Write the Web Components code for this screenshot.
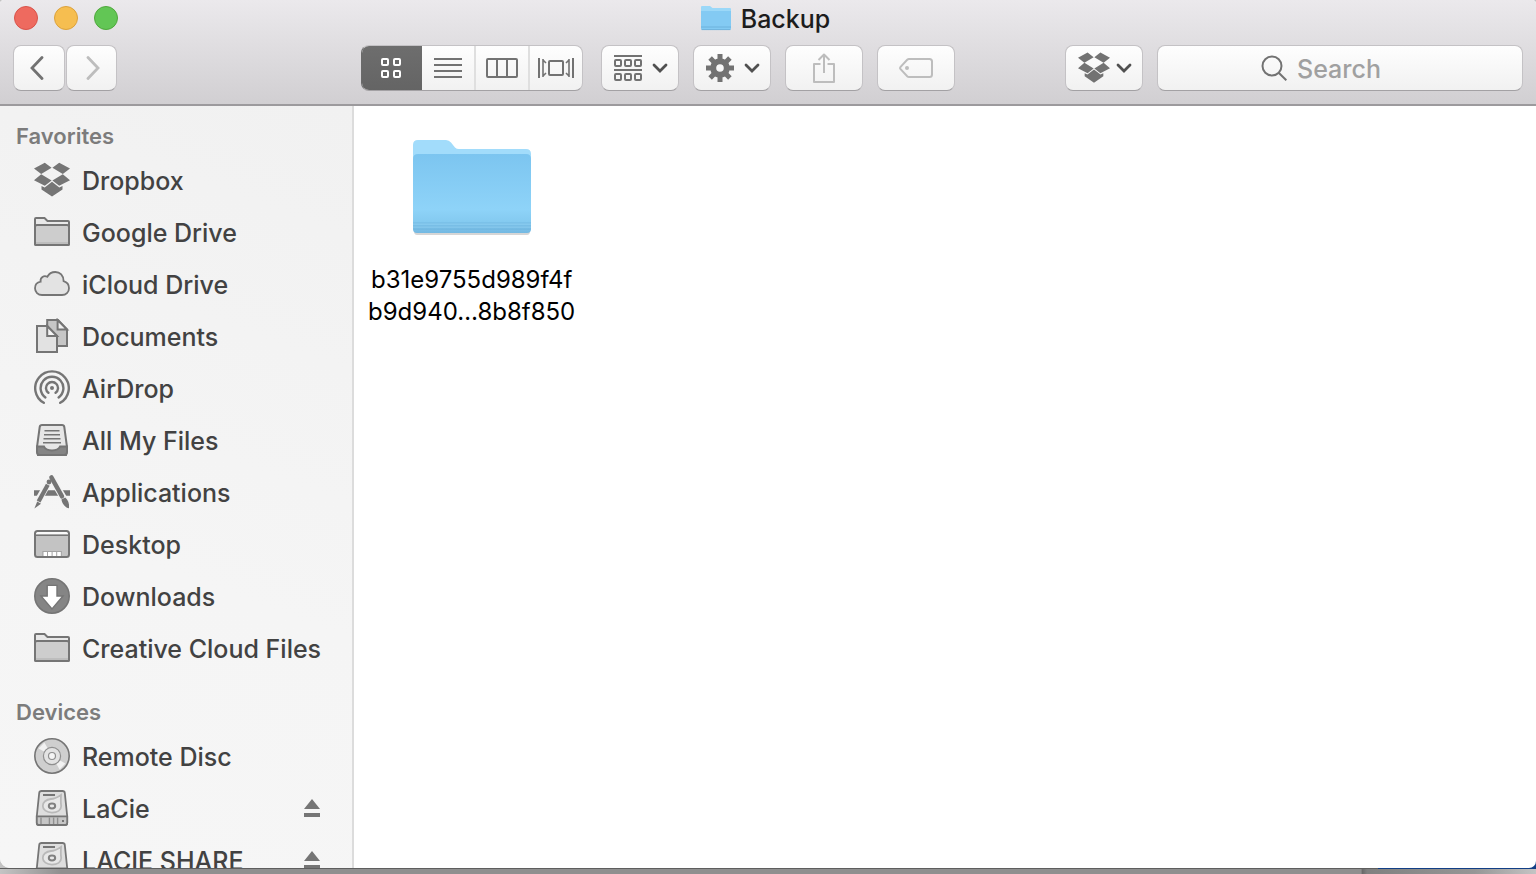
<!DOCTYPE html>
<html lang="en">
<head>
<meta charset="utf-8">
<title>Backup</title>
<style>
    body {
        margin: 0;
        height: 100vh;
        overflow: hidden;
        font-family: Inter, "Liberation Sans", sans-serif;
        font-size: 25px;
        font-weight: 450;
        /* the desktop that shows below the window */
        background:
            linear-gradient(#123f86, #123f86) right bottom 5px / 158px 12px no-repeat,
            linear-gradient(#5e5e5e, #5e5e5e) left bottom 5px / 100% 1px no-repeat,
            linear-gradient(90deg, #c4c4c4, #8f8f8f 4%, #8f8f8f 88.6%, #6a6a6a 88.7%, #808080 89%, #969696 96%, #c4c4c4);
    }
</style>
</head>
<body>
<finder-window>
    <finder-toolbar slot="toolbar" title-text="Backup"></finder-toolbar>
    <sidebar-section slot="sidebar" heading="Favorites">
        <sidebar-item icon="dropbox">Dropbox</sidebar-item>
        <sidebar-item icon="folder">Google Drive</sidebar-item>
        <sidebar-item icon="cloud">iCloud Drive</sidebar-item>
        <sidebar-item icon="documents">Documents</sidebar-item>
        <sidebar-item icon="airdrop">AirDrop</sidebar-item>
        <sidebar-item icon="allfiles">All My Files</sidebar-item>
        <sidebar-item icon="applications">Applications</sidebar-item>
        <sidebar-item icon="desktop">Desktop</sidebar-item>
        <sidebar-item icon="downloads">Downloads</sidebar-item>
        <sidebar-item icon="folder">Creative Cloud Files</sidebar-item>
    </sidebar-section>
    <sidebar-section slot="sidebar" heading="Devices">
        <sidebar-item icon="disc">Remote Disc</sidebar-item>
        <sidebar-item icon="drive" eject>LaCie</sidebar-item>
        <sidebar-item icon="drive" eject>LACIE SHARE</sidebar-item>
    </sidebar-section>
    <folder-tile>b31e9755d989f4f<br>b9d940…8b8f850</folder-tile>
</finder-window>

<script>
// sidebar and toolbar icons, all drawn with currentColor
const icons = {
    dropbox: `<svg width="36" height="36" viewBox="0 0 36 36" fill="currentColor">
        <path d="M10.8.7 17.6 5.8 7.2 12 0 6.4zM25.2.7 18.4 5.8 28.8 12 36 6.4zM7.2 12.2 17.6 18.6 10.8 23.8 0 18.2zM28.8 12.2 18.4 18.6 25.2 23.8 36 18.2zM18 19.8 10.7 25.4 7.5 24V27.4L18 34.6 28.5 27.4V24L25.3 25.4z"/></svg>`,
    folder: `<svg width="36" height="36" viewBox="0 0 36 36" stroke="currentColor" stroke-width="2">
        <path d="M1 30V5Q1 4 2 4H10.5L13.5 7H34Q35 7 35 8V30Q35 31 34 31H2Q1 31 1 30z" fill="#e8e8e8"/>
        <path d="M1 13Q1 11 3 11H33Q35 11 35 13V30Q35 31 34 31H2Q1 31 1 30z" fill="#cdcdcd"/>
        <path d="M2 29H34" stroke="#bdbdbd"/></svg>`,
    cloud: `<svg width="36" height="36" viewBox="0 0 36 36" stroke="currentColor" stroke-width="1.8" fill="#e3e3e3">
        <path d="M8 29C4 29 1 26 1 22.3 1 19 3.3 16.3 6.6 15.7 6 11.4 10 9 13.3 10.8 15 7.6 18 6 21.3 6 26 6 29.6 9.5 29.6 15.2 33 16.2 35 18.8 35 22.2 35 26 32 29 28 29z"/></svg>`,
    documents: `<svg width="36" height="36" viewBox="0 0 36 36" stroke="currentColor" stroke-width="2">
        <path d="M13.2 2H24L33 11.5V28H13.2z" fill="#c6c6c6"/><path d="M23.6 2V11.5H33z" fill="#efefef"/>
        <path d="M3 8H13.2L23 18V34H3z" fill="#e2e2e2"/><path d="M13.2 8V18H23z" fill="#f4f4f4"/></svg>`,
    airdrop: `<svg width="36" height="36" viewBox="0 0 36 36" fill="none" stroke="currentColor" stroke-width="2.4" stroke-linecap="round">
        <path d="M9.8 32.8A16.8 16.8 0 1 1 26.2 32.8M11.4 27.4A11.4 11.4 0 1 1 24.6 27.4M14.4 22.8A6 6 0 1 1 21.6 22.8"/>
        <circle cx="18" cy="18" r="2" fill="currentColor" stroke="none"/></svg>`,
    allfiles: `<svg width="36" height="36" viewBox="0 0 36 36" stroke="currentColor" stroke-width="2">
        <path d="M8 3H28Q30 3 30.3 5L33 25 32 33H4L3 25 5.7 5Q6 3 8 3z" fill="#e6e6e6"/>
        <path d="M3 24.6H10Q12 28.4 18 28.4T26 24.6H33V30Q33 33 30 33H6Q3 33 3 30z" fill="#858585"/>
        <path d="M10.5 8.7H25.5M10 12.7H26M9.5 16.7H26.5M9 20.7H27" stroke-width="1.6"/></svg>`,
    applications: `<svg width="36" height="36" viewBox="0 0 36 36" fill="none" stroke="currentColor">
        <path d="M0 19H36" stroke-width="5.4"/>
        <path d="M15.2 7 2.6 29.5" stroke="#f3f3f3" stroke-width="7"/>
        <path d="M17.2 3.2 33 30" stroke="#f3f3f3" stroke-width="7"/>
        <path d="M17.4 3.4 28 22.4" stroke-width="4.4" stroke-linecap="round"/>
        <path d="M13.8 10.8 4.6 27.6" stroke-width="4.2"/>
        <circle cx="15" cy="8" r="2.4" fill="currentColor" stroke="none"/>
        <path d="M3.2 27.4 7 29.8.4 34.6zM27.4 25.4 31.2 23.6C34 26 35.6 29.6 35 34.2 31.6 33.6 28.4 30.4 27.4 25.4z" fill="currentColor" stroke="none"/></svg>`,
    desktop: `<svg width="36" height="36" viewBox="0 0 36 36">
        <rect x="1" y="5" width="34" height="26" rx="2.5" fill="#c3c3c3"/>
        <path d="M2 8.6V7Q2 5.5 4 5.5H32Q34 5.5 34 7V8.6z" fill="#fafafa"/>
        <path d="M1 9.2H35" stroke="currentColor" stroke-width="1.6"/>
        <rect x="8.4" y="25" width="19.4" height="6" fill="#a3a3a3"/>
        <path d="M9.5 26H13V30H9.5zM14 26H17.6V30H14zM18.6 26H22.2V30H18.6zM23.2 26H26.8V30H23.2z" fill="#fff"/>
        <rect x="1" y="5" width="34" height="26" rx="2.5" fill="none" stroke="currentColor" stroke-width="2"/></svg>`,
    downloads: `<svg width="36" height="36" viewBox="0 0 36 36">
        <circle cx="18" cy="18" r="17.2" fill="#858585" stroke="currentColor" stroke-width="1.6"/>
        <path d="M13.2 7.4H23V18H29L18 31 7 18H13.2z" fill="#fff" stroke="currentColor" stroke-width="1.4"/></svg>`,
    disc: `<svg width="36" height="36" viewBox="0 0 36 36" stroke="currentColor" stroke-width="1.6">
        <circle cx="18" cy="18" r="17.2" fill="#cfcfcf"/>
        <path d="M18 18 4.6 10.4 10.4 4.6zM18 18 31.4 25.6 25.6 31.4z" fill="#f2f2f2" stroke="none"/>
        <circle cx="18" cy="18" r="8.6" fill="#e3e3e3" stroke="#8f8f8f" stroke-width="1.2"/>
        <circle cx="18" cy="18" r="3.5" fill="#f5f5f5" stroke="#8f8f8f" stroke-width="1.2"/></svg>`,
    drive: `<svg width="36" height="36" viewBox="0 0 36 36" fill="none" stroke="currentColor" stroke-width="1.8">
        <path d="M7.6 1H28.4Q30.6 1 30.8 3L33.2 26V33Q33.2 35 31 35H5Q2.8 35 2.8 33V26L5.2 3Q5.4 1 7.6 1z" fill="#dedede"/>
        <path d="M2.8 26.4H33.2V33Q33.2 35 31 35H5Q2.8 35 2.8 33z" fill="#c6c6c6"/>
        <path d="M9 5H21" stroke-width="2"/>
        <path d="M27 5Q21 9 17 9C12 9.4 8.8 12.4 8.8 16S12.6 22.6 18 22.6 27.2 20 27.2 16Q26.6 13 27 5z" fill="#e8e8e8" stroke="#b9b9b9"/>
        <ellipse cx="18" cy="16" rx="3.2" ry="2.4" stroke="#808080" stroke-width="2"/>
        <path d="M7 27.5V34M15.4 27.5V34M19.6 27.5V34M23.6 27.5V34" stroke="#8f8f8f" stroke-width="1.4"/>
        <rect x="28" y="30" width="2" height="2" fill="currentColor" stroke="none"/></svg>`,
    eject: `<svg width="16" height="18" viewBox="0 0 16 18" fill="currentColor"><path d="M8 0 16 10H0zM0 14H16V18H0z"/></svg>`,
    back: `<svg width="14" height="24" viewBox="0 0 14 24" fill="none" stroke="currentColor" stroke-width="2.8" stroke-linecap="round"><path d="M12 1.5 2 12 12 22.5"/></svg>`,
    forward: `<svg width="14" height="24" viewBox="0 0 14 24" fill="none" stroke="currentColor" stroke-width="2.8" stroke-linecap="round"><path d="M2 1.5 12 12 2 22.5"/></svg>`,
    chevron: `<svg width="16" height="10" viewBox="0 0 16 10" fill="none" stroke="#505050" stroke-width="2.8" stroke-linecap="round"><path d="M2 2 8 8 14 2"/></svg>`,
    grid: `<svg width="20" height="20" viewBox="0 0 20 20" fill="none" stroke="currentColor" stroke-width="2">
        <rect x="1" y="1" width="6" height="6" rx="1"/><rect x="13" y="1" width="6" height="6" rx="1"/><rect x="1" y="13" width="6" height="6" rx="1"/><rect x="13" y="13" width="6" height="6" rx="1"/></svg>`,
    list: `<svg width="28" height="20" viewBox="0 0 28 20" stroke="currentColor" stroke-width="2"><path d="M0 1H28M0 7H28M0 13H28M0 19H28"/></svg>`,
    columns: `<svg width="32" height="20" viewBox="0 0 32 20" fill="none" stroke="currentColor" stroke-width="2"><rect x="1" y="1" width="30" height="18" rx="1"/><path d="M11 1V19M21 1V19"/></svg>`,
    flow: `<svg width="36" height="20" viewBox="0 0 36 20" fill="none" stroke="currentColor" stroke-width="2">
        <rect x="11" y="3" width="14" height="14" rx="1"/>
        <path d="M1 0V20M35 0V20"/><path d="M5 1V19M5 2 8 5M5 18 8 15M31 1V19M31 2 28 5M31 18 28 15" stroke-width="1.6"/></svg>`,
    arrange: `<svg width="28" height="26" viewBox="0 0 28 26" fill="none" stroke="currentColor" stroke-width="2">
        <path d="M0 1H28M0 15H28"/>
        <rect x="1" y="5" width="6" height="6" rx="1"/><rect x="11" y="5" width="6" height="6" rx="1"/><rect x="21" y="5" width="6" height="6" rx="1"/>
        <rect x="1" y="19" width="6" height="6" rx="1"/><rect x="11" y="19" width="6" height="6" rx="1"/><rect x="21" y="19" width="6" height="6" rx="1"/></svg>`,
    gear: `<svg width="28" height="28" viewBox="-14 -14 28 28" fill="none" stroke="currentColor">
        <circle r="6.8" stroke-width="6"/>
        <path d="M0-14V-8M0 8V14M-14 0H-8M8 0H14M-9.9-9.9-6-6M6 6 9.9 9.9M-9.9 9.9-6 6M6-6 9.9-9.9" stroke-width="5"/></svg>`,
    share: `<svg width="22" height="30" viewBox="0 0 22 30" fill="none" stroke="currentColor" stroke-width="2" stroke-linejoin="round">
        <path d="M7.5 11H1V29H21V11H14.5M11 20V1.5M5.5 7 11 1.5 16.5 7"/></svg>`,
    tag: `<svg width="34" height="20" viewBox="0 0 34 20" fill="none" stroke="currentColor" stroke-width="2">
        <path d="M10 1H30.5Q33 1 33 3.5V16.5Q33 19 30.5 19H10Q9 19 8.2 18.2L1.6 11.2Q.6 10 1.6 8.8L8.2 1.8Q9 1 10 1z"/>
        <circle cx="8" cy="10" r="2" fill="currentColor" stroke="none"/></svg>`,
    search: `<svg width="26" height="26" viewBox="0 0 26 26" fill="none" stroke="currentColor" stroke-width="2"><circle cx="11" cy="11" r="9.5"/><path d="M17.7 17.7 25.3 25.3"/></svg>`
};

class FinderWindow extends HTMLElement {
    constructor() {
        super();
        this.attachShadow({mode: 'open'});
    }

    connectedCallback() {
        this.shadowRoot.innerHTML = `
            <style>
                :host {
                    display: flex;
                    flex-direction: column;
                    height: calc(100vh - 6px);
                    overflow: hidden;
                    border-radius: 4px 4px 7px 10px;
                    background: #fff;
                }

                .body {
                    display: flex;
                    flex: 1;
                    min-height: 0;
                }

                nav {
                    box-sizing: border-box;
                    flex: none;
                    width: 354px;
                    padding-top: 12px;
                    overflow: hidden;
                    border-right: 2px solid #dcdcdc;
                    background: linear-gradient(200deg, #f1f1f1, #f5f5f5 60%, #f6f6f6);
                }

                main {
                    flex: 1;
                    padding: 32px 14px;
                }
            </style>
            <slot name="toolbar"></slot>
            <div class="body">
                <nav><slot name="sidebar"></slot></nav>
                <main><slot></slot></main>
            </div>
        `;
    }
}
customElements.define('finder-window', FinderWindow);

class ToolButton extends HTMLElement {
    constructor() {
        super();
        this.attachShadow({mode: 'open'});
    }

    connectedCallback() {
        const icon = this.getAttribute('icon');
        const label = this.getAttribute('label');

        this.shadowRoot.innerHTML = `
            <style>
                :host {
                    display: flex;
                    width: 78px;
                    height: 46px;
                    color: #727272;
                }

                :host([icon="back"]) {
                    width: 52px;
                }

                :host([icon="forward"]) {
                    width: 51px;
                }

                :host([dim]) {
                    color: #bdbdbd;
                }

                button {
                    box-sizing: border-box;
                    display: flex;
                    align-items: center;
                    justify-content: center;
                    gap: 10px;
                    width: 100%;
                    padding: 0;
                    color: inherit;
                    border: 1px solid #c4c2c5;
                    border-bottom-color: #a3a1a4;
                    border-radius: 8px;
                    background: linear-gradient(#fefefe, #f1f1f1);
                }

                :host([menu]) button {
                    padding-left: 2px;
                }

                button.back {
                    padding-right: 4px;
                }

                button.forward {
                    padding-left: 2px;
                }

                button.dropbox {
                    gap: 6px;
                }

                .dropbox svg:first-child {
                    width: 32px;
                    height: 32px;
                }
            </style>
            <button class="${icon}" aria-label="${label}">${icons[icon]}${this.hasAttribute('menu') ? icons.chevron : ''}</button>
        `;
    }
}
customElements.define('tool-button', ToolButton);

class ViewSwitch extends HTMLElement {
    constructor() {
        super();
        this.attachShadow({mode: 'open'});
    }

    connectedCallback() {
        this.shadowRoot.innerHTML = `
            <style>
                :host {
                    box-sizing: border-box;
                    display: flex;
                    height: 46px;
                    overflow: hidden;
                    border: 1px solid #c4c2c5;
                    border-bottom-color: #a3a1a4;
                    border-left-color: #6a6a6a;
                    border-radius: 8px;
                    background: linear-gradient(#fefefe, #f1f1f1);
                }

                button {
                    box-sizing: border-box;
                    display: flex;
                    align-items: center;
                    justify-content: center;
                    width: 54px;
                    padding: 0;
                    color: #727272;
                    border: 0;
                    border-left: 2px solid #dfdfdf;
                    background: none;
                }

                button.active {
                    width: 60px;
                    margin: -1px 0;
                    padding-right: 2px;
                    color: #fff;
                    border-left: 0;
                    background: linear-gradient(#6e6e6e, #646464);
                }

                .active + button {
                    width: 52px;
                    border-left: 0;
                }
            </style>
            <button class="active" aria-label="Icon view" aria-pressed="true">${icons.grid}</button>
            <button aria-label="List view">${icons.list}</button>
            <button aria-label="Column view">${icons.columns}</button>
            <button aria-label="Cover Flow">${icons.flow}</button>
        `;
    }
}
customElements.define('view-switch', ViewSwitch);

class SearchField extends HTMLElement {
    constructor() {
        super();
        this.attachShadow({mode: 'open'});
    }

    connectedCallback() {
        this.shadowRoot.innerHTML = `
            <style>
                :host {
                    display: flex;
                }

                label {
                    box-sizing: border-box;
                    display: flex;
                    align-items: center;
                    justify-content: center;
                    gap: 10px;
                    width: 100%;
                    height: 46px;
                    color: #727272;
                    border: 1px solid #c4c2c5;
                    border-bottom-color: #a3a1a4;
                    border-radius: 8px;
                    background: linear-gradient(#fefefe, #f1f1f1);
                }

                input {
                    width: 122px;
                    padding: 2px 0 0;
                    font: inherit;
                    border: 0;
                    outline: 0;
                    background: none;
                }

                input::placeholder {
                    color: #a0a0a0;
                }
            </style>
            <label>${icons.search}<input type="text" placeholder="Search" aria-label="Search"></label>
        `;
    }
}
customElements.define('search-field', SearchField);

class FinderToolbar extends HTMLElement {
    constructor() {
        super();
        this.attachShadow({mode: 'open'});
    }

    connectedCallback() {
        const title = this.getAttribute('title-text');

        this.shadowRoot.innerHTML = `
            <style>
                :host {
                    display: block;
                    padding: 0 13px 13px;
                    border-bottom: 2px solid #9c9a9d;
                    background: linear-gradient(#ebe9ec, #d1cfd2);
                }

                .titlebar {
                    display: grid;
                    grid-template-columns: 1fr auto 1fr;
                    align-items: center;
                    height: 36px;
                    margin-bottom: 9px;
                }

                .lights {
                    display: flex;
                    gap: 16px;
                    padding-left: 1px;
                }

                .lights button {
                    box-sizing: border-box;
                    width: 24px;
                    height: 24px;
                    padding: 0;
                    border: 1px solid #d9534a;
                    border-radius: 50%;
                    background: #ee6a5f;
                }

                .lights .minimize {
                    border-color: #dca23c;
                    background: #f6be50;
                }

                .lights .zoom {
                    border-color: #4fa83c;
                    background: #62c655;
                }

                h1 {
                    display: flex;
                    align-items: center;
                    gap: 9px;
                    margin: 0;
                    padding-right: 6px;
                    font-size: 25px;
                    font-weight: 450;
                    line-height: 34px;
                    color: #1c1c1c;
                }

                h1 span {
                    padding-top: 2px;
                }

                .tools {
                    display: flex;
                }

                .group {
                    display: flex;
                    gap: 14px;
                    margin-left: 18px;
                }

                .nav {
                    display: flex;
                    gap: 1px;
                }

                .space {
                    flex: 244;
                }

                .space.small {
                    flex: 110;
                }

                search-field {
                    flex: 366;
                    margin-left: 14px;
                }
            </style>
            <div class="titlebar">
                <div class="lights">
                    <button class="close" aria-label="Close"></button>
                    <button class="minimize" aria-label="Minimize"></button>
                    <button class="zoom" aria-label="Zoom"></button>
                </div>
                <h1>
                    <svg width="32" height="26" viewBox="0 0 32 26">
                        <path d="M1 24V2Q1 1 2 1H10L12.5 3H30Q31 3 31 4V24z" fill="#9bd8f8"/>
                        <path d="M1 6H31V23Q31 24.5 30 24.5H2Q1 24.5 1 23z" fill="#83caf3"/>
                        <path d="M1 22H31M1.5 24.6H30.5" stroke="#6cb2dc"/>
                    </svg>
                    <span>${title}</span>
                </h1>
            </div>
            <div class="tools">
                <div class="nav">
                    <tool-button icon="back" label="Back"></tool-button>
                    <tool-button icon="forward" label="Forward" dim></tool-button>
                </div>
                <div class="space"></div>
                <view-switch></view-switch>
                <div class="group">
                    <tool-button icon="arrange" label="Arrange" menu></tool-button>
                    <tool-button icon="gear" label="Action" menu></tool-button>
                    <tool-button icon="share" label="Share" dim></tool-button>
                    <tool-button icon="tag" label="Edit tags" dim></tool-button>
                </div>
                <div class="space small"></div>
                <tool-button icon="dropbox" label="Dropbox" menu></tool-button>
                <search-field></search-field>
            </div>
        `;
    }
}
customElements.define('finder-toolbar', FinderToolbar);

class SidebarSection extends HTMLElement {
    constructor() {
        super();
        this.attachShadow({mode: 'open'});
    }

    connectedCallback() {
        this.shadowRoot.innerHTML = `
            <style>
                :host {
                    display: block;
                    margin-bottom: 20px;
                }

                h2 {
                    margin: 0;
                    padding-left: 16px;
                    font-size: 22px;
                    font-weight: 600;
                    line-height: 36px;
                    color: #7c7c7c;
                }
            </style>
            <h2>${this.getAttribute('heading')}</h2>
            <slot></slot>
        `;
    }
}
customElements.define('sidebar-section', SidebarSection);

class SidebarItem extends HTMLElement {
    constructor() {
        super();
        this.attachShadow({mode: 'open'});
    }

    connectedCallback() {
        this.shadowRoot.innerHTML = `
            <style>
                :host {
                    display: flex;
                    align-items: center;
                    height: 52px;
                    padding: 0 32px 0 34px;
                    color: #757575;
                }

                a {
                    display: flex;
                    flex: 1;
                    align-items: center;
                    gap: 12px;
                    color: inherit;
                    text-decoration: none;
                    white-space: nowrap;
                }

                span {
                    padding-top: 2px;
                    color: #424242;
                }

                button {
                    display: flex;
                    padding: 0;
                    color: inherit;
                    border: 0;
                    background: none;
                }

                svg {
                    flex: none;
                }
            </style>
            <a href="#">${icons[this.getAttribute('icon')]}<span><slot></slot></span></a>
            ${this.hasAttribute('eject') ? `<button aria-label="Eject">${icons.eject}</button>` : ''}
        `;
    }
}
customElements.define('sidebar-item', SidebarItem);

class FolderTile extends HTMLElement {
    constructor() {
        super();
        this.attachShadow({mode: 'open'});
    }

    connectedCallback() {
        this.shadowRoot.innerHTML = `
            <style>
                :host {
                    display: inline-block;
                }

                button {
                    display: flex;
                    flex-direction: column;
                    align-items: center;
                    gap: 26px;
                    padding: 0;
                    font: inherit;
                    font-size: 24px;
                    font-weight: 400;
                    line-height: 32px;
                    color: #000;
                    border: 0;
                    background: none;
                }
            </style>
            <button>
                <svg width="120" height="100" viewBox="0 0 120 100">
                    <defs>
                        <linearGradient id="front" x1="0" y1="0" x2="0" y2="1">
                            <stop offset="0" stop-color="#7cc5f0"/>
                            <stop offset=".7" stop-color="#8ed3f8"/>
                            <stop offset=".86" stop-color="#84caf0"/>
                            <stop offset="1" stop-color="#74b9e2"/>
                        </linearGradient>
                    </defs>
                    <path d="M2 90H118V93Q118 97 115 97H5Q2 97 2 93z" fill="#000" opacity=".16"/>
                    <path d="M1 90V7Q1 2 6 2H34Q37 2 39 4.5L43 9.5Q44.5 11 47 11H114Q119 11 119 16V90z" fill="#a2dcfb"/>
                    <path d="M1 21Q1 16 6 16H114Q119 16 119 21V91Q119 95 115 95H5Q1 95 1 91z" fill="url(#front)"/>
                    <path d="M1 85H119M1 88H119M1 91H119" stroke="#69aed9" stroke-opacity=".6"/>
                    <path d="M1 86H119M1 89H119" stroke="#9ad6f6" stroke-opacity=".5"/>
                </svg>
                <span><slot></slot></span>
            </button>
        `;
    }
}
customElements.define('folder-tile', FolderTile);
</script>
</body>
</html>
